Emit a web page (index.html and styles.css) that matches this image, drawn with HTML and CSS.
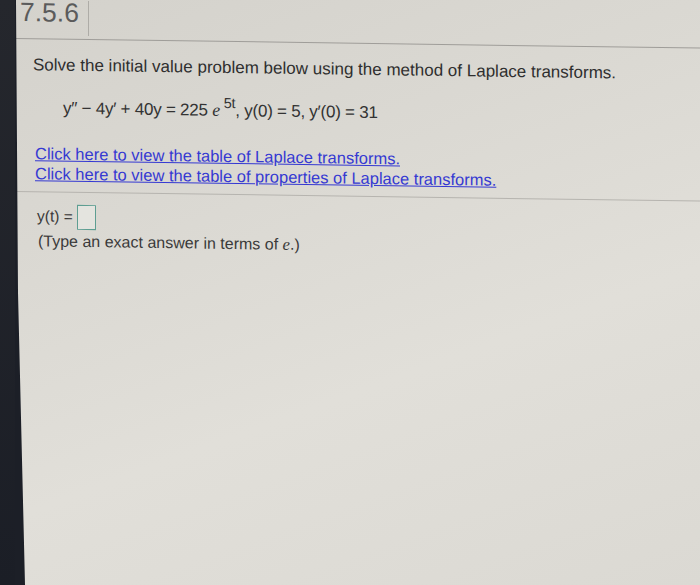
FILE: index.html
```html
<!DOCTYPE html>
<html>
<head>
<meta charset="utf-8">
<link rel="stylesheet" href="styles.css">
</head>
<body>
<div class="screen">
  <div class="bezel"></div>
  <div class="page">
    <div class="sheet">
      <div class="header">
        <div class="section">7.5.6</div>
      </div>
      <div class="content">
        <p class="prompt">Solve the initial value problem below using the method of Laplace transforms.</p>
        <p class="equation">y′′ − 4y′ + 40y = 225 <span class="e">e</span><sup>5t</sup>, y(0) = 5, y′(0) = 31</p>
        <div class="links">
          <a href="#">Click here to view the table of Laplace transforms.</a>
          <a href="#">Click here to view the table of properties of Laplace transforms.</a>
        </div>
      </div>
      <div class="answer">
        <div class="answer-row">y(t) = <span class="box"></span></div>
        <div class="hint">(Type an exact answer in terms of <span class="e">e</span>.)</div>
      </div>
    </div>
  </div>
</div>
</body>
</html>
```
FILE: styles.css
```css
html, body {
  margin: 0;
  padding: 0;
  height: 100%;
}
body {
  font-family: "Liberation Sans", Arial, sans-serif;
  color: #333;
  background: #1d2028;
  overflow: hidden;
}
.screen {
  position: relative;
  display: flex;
  height: 585px;
  overflow: hidden;
}
.screen::after {
  content: "";
  position: absolute;
  left: 15px;
  top: 0;
  width: 12px;
  height: 585px;
  background: #1c1f27;
  clip-path: polygon(0 0, 1px 0, 3px 50%, 10px 100%, 0 100%);
}
.bezel {
  width: 15px;
  flex: none;
  background: linear-gradient(180deg, #25272d, #1b1e26);
}
.page {
  flex: 1;
  background: linear-gradient(160deg, #d4d2cc 0%, #dad8d2 30%, #e1dfd9 62%, #dbd9d3 100%);
  overflow: hidden;
}
.sheet {
  display: flex;
  flex-direction: column;
  transform: skewY(0.8deg);
  transform-origin: left top;
}
.header {
  height: 38px;
  border-bottom: 1px solid #9f9d99;
  display: flex;
}
.section {
  width: 68px;
  padding-left: 5px;
  height: 35px;
  border-right: 1px solid #aeaca7;
  font-size: 26.5px;
  line-height: 24px;
  color: #5b5b5b;
}
.content {
  padding: 16px 0 8px 18px;
  border-bottom: 1px solid #b6b4af;
}
.prompt {
  margin: 0;
  font-size: 17px;
  line-height: 20px;
  color: #2e2e2e;
}
.equation {
  margin: 22px 0 0 30px;
  font-size: 17px;
  line-height: 20px;
  color: #333;
  letter-spacing: -0.25px;
}
.e {
  font-family: "Liberation Serif", "Times New Roman", serif;
  font-style: italic;
  font-size: 1.05em;
}
sup {
  font-size: 0.85em;
  line-height: 0;
  vertical-align: 8px;
  margin-left: 4px;
}
.links {
  margin-top: 25px;
  margin-left: 2px;
  display: flex;
  flex-direction: column;
}
.links a {
  color: #3539d2;
  font-size: 16.5px;
  line-height: 20px;
  text-decoration: underline;
}
.answer {
  padding: 11px 0 0 22px;
  color: #3a3a3a;
}
.answer-row {
  display: flex;
  align-items: center;
  gap: 4px;
  height: 26px;
  font-size: 15.5px;
}
.box {
  display: inline-block;
  width: 17px;
  height: 23px;
  border: 1px solid #5e9e92;
  background: #e4e4df;
}
.hint {
  font-size: 16px;
  line-height: 20px;
  margin-top: 2px;
  margin-left: 1px;
}
```
